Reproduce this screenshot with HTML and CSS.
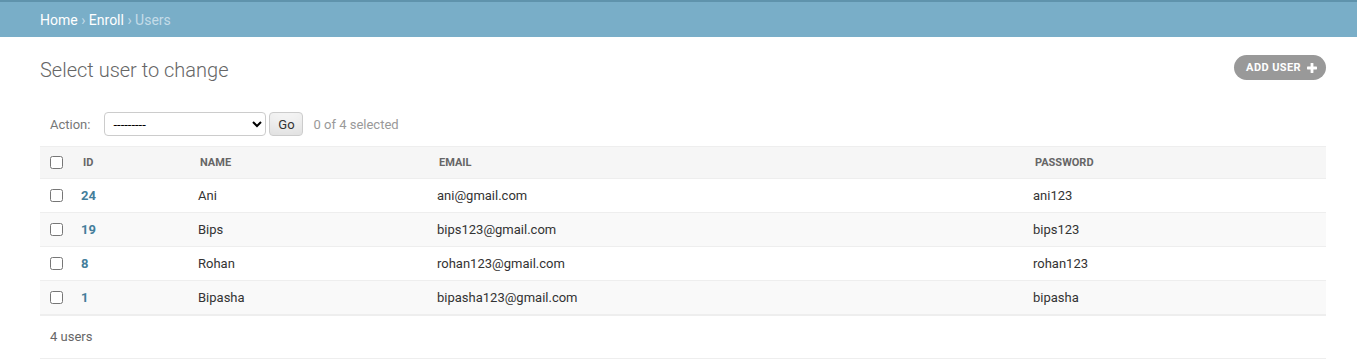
FILE: index.html
```html
<!DOCTYPE html>
<html lang="en">
<head>
<meta charset="utf-8">
<title>Select user to change</title>
<link rel="stylesheet" href="styles.css">
</head>
<body>
<div class="breadcrumbs">
  <a href="#">Home</a> › <a href="#">Enroll</a> › Users
</div>
<div class="content">
  <div class="title-row">
    <h1>Select user to change</h1>
    <a href="#" class="addlink">Add user
      <svg class="plus" width="10" height="10" viewBox="0 0 10 10"><rect x="3.6" y="0" width="2.8" height="10" rx="0.6" fill="#fff"/><rect x="0" y="3.6" width="10" height="2.8" rx="0.6" fill="#fff"/></svg>
    </a>
  </div>
  <div class="actions">
    <label class="action-label">Action:</label>
    <select class="action-select"><option>---------</option></select>
    <button class="go">Go</button>
    <span class="counter">0 of 4 selected</span>
  </div>
  <table class="result-list">
    <colgroup>
      <col class="c-check"><col class="c-id"><col class="c-name"><col class="c-email"><col class="c-pass">
    </colgroup>
    <thead>
      <tr>
        <th class="check-col"><input type="checkbox"></th>
        <th><span class="htext">ID</span></th>
        <th><span class="htext">Name</span></th>
        <th><span class="htext">Email</span></th>
        <th><span class="htext">Password</span></th>
      </tr>
    </thead>
    <tbody>
      <tr><td class="check-col"><input type="checkbox"></td><th class="idcell"><a href="#">24</a></th><td>Ani</td><td>ani@gmail.com</td><td>ani123</td></tr>
      <tr class="alt"><td class="check-col"><input type="checkbox"></td><th class="idcell"><a href="#">19</a></th><td>Bips</td><td>bips123@gmail.com</td><td>bips123</td></tr>
      <tr><td class="check-col"><input type="checkbox"></td><th class="idcell"><a href="#">8</a></th><td>Rohan</td><td>rohan123@gmail.com</td><td>rohan123</td></tr>
      <tr class="alt"><td class="check-col"><input type="checkbox"></td><th class="idcell"><a href="#">1</a></th><td>Bipasha</td><td>bipasha123@gmail.com</td><td>bipasha</td></tr>
    </tbody>
  </table>
  <p class="paginator">4 users</p>
</div>
</body>
</html>
```
FILE: styles.css
```css
html, body {
  margin: 0;
  padding: 0;
}
body {
  font-family: Roboto, "Liberation Sans", Arial, sans-serif;
  font-size: 14px;
  color: #333;
  background: #fff;
}
a {
  text-decoration: none;
}
.breadcrumbs {
  background: #79aec8;
  border-top: 2px solid #5f93ac;
  height: 37px;
  box-sizing: border-box;
  padding: 9px 40px 0;
  line-height: 18px;
  color: #c4dce8;
  font-size: 14px;
}
.breadcrumbs a {
  color: #fff;
}
.content {
  padding: 21px 31px 0 40px;
}
.title-row {
  display: flex;
  justify-content: space-between;
  align-items: flex-start;
}
h1 {
  margin: 0 0 20px;
  font-size: 20px;
  line-height: 24px;
  font-weight: 300;
  color: #666;
}
.addlink {
  margin-top: -3px;
  display: flex;
  align-items: center;
  gap: 6px;
  height: 25px;
  box-sizing: border-box;
  padding: 0 9px 0 12px;
  background: #999;
  border-radius: 15px;
  color: #fff;
  font-size: 11px;
  font-weight: 700;
  letter-spacing: 0.4px;
  text-transform: uppercase;
}
.plus {
  display: block;
  margin-top: 1px;
}
.actions {
  display: flex;
  align-items: center;
  padding: 10px;
  height: 24px;
  font-size: 13px;
  color: #999;
}
.action-label {
  color: #777;
}
.action-select {
  margin-left: 14px;
  width: 162px;
  height: 24px;
  border: 1px solid #ccc;
  border-radius: 4px;
  background: #fff;
  color: #000;
  font-family: Roboto, "Liberation Sans", Arial, sans-serif;
  font-size: 13px;
  padding: 0 0 0 4px;
}
.go {
  margin-left: 3px;
  height: 24px;
  width: 34px;
  padding: 0;
  border: 1px solid #ccc;
  border-radius: 4px;
  background: #f4f4f4;
  box-shadow: 0 -15px 20px -10px rgba(0, 0, 0, 0.1) inset;
  color: #333;
  font-family: Roboto, "Liberation Sans", Arial, sans-serif;
  font-size: 13px;
}
.counter {
  margin-left: 10px;
}
.result-list {
  width: 100%;
  table-layout: fixed;
  border-collapse: collapse;
  border-bottom: 1px solid #ddd;
}
.c-check { width: 33px; }
.c-id { width: 117px; }
.c-name { width: 239px; }
.c-email { width: 596px; }
.c-pass { width: auto; }
thead th {
  background: #f6f6f6;
  height: 32px;
  box-sizing: border-box;
  padding: 0 10px;
  border-top: 1px solid #eee;
  border-bottom: 1px solid #eee;
  text-align: left;
  font-size: 11px;
  font-weight: 700;
  text-transform: uppercase;
  color: #666;
}
thead th.check-col,
tbody td.check-col {
  padding: 0 0 0 10px;
}
input[type="checkbox"] {
  margin: 0;
  width: 13px;
  height: 13px;
  display: block;
}
tbody td,
tbody th {
  height: 34px;
  box-sizing: border-box;
  padding: 0 8px;
  border-bottom: 1px solid #eee;
  text-align: left;
  font-size: 13px;
  line-height: 16px;
  font-weight: 400;
  color: #333;
}
tbody tr.alt {
  background: #f9f9f9;
}
tbody th.idcell a {
  color: #447e9b;
  font-weight: 700;
}
.paginator {
  margin: 0;
  padding: 10px;
  line-height: 22px;
  font-size: 13px;
  color: #666;
  border-top: 1px solid #eee;
  border-bottom: 1px solid #eee;
}
```
